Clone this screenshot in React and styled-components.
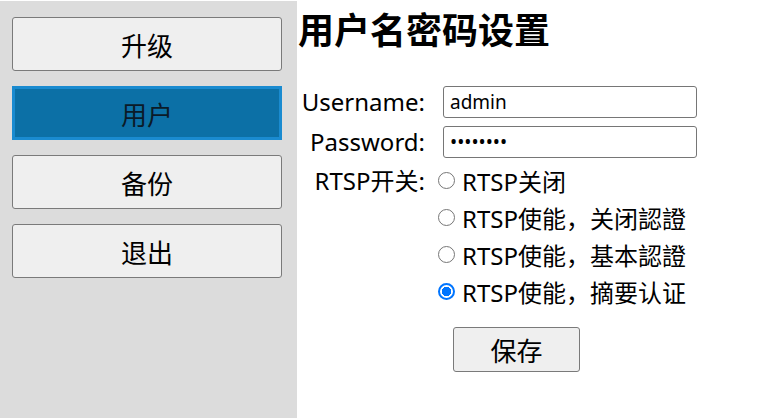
import React from "react";
import styled, { createGlobalStyle } from "styled-components";

const Global = createGlobalStyle`
  html, body { margin: 0; padding: 0; background: #fff; }
  body { font-family: "Noto Sans", "Noto Sans CJK SC", sans-serif; color: #000; }
  * { box-sizing: border-box; }
`;

const Page = styled.div`
  display: flex;
  padding-top: 1px;
  height: 418px;
  overflow: hidden;
`;

const Sidebar = styled.nav`
  width: 297px;
  flex: none;
  background: #dcdcdc;
  padding: 16px 15px 0 12px;
  display: flex;
  flex-direction: column;
  gap: 15px;
`;

const NavButton = styled.button`
  height: 54px;
  width: 100%;
  font-family: "Noto Sans CJK SC", sans-serif;
  font-size: 26px;
  color: ${(p) => (p.$active ? "#0b1a28" : "#000")};
  background: ${(p) => (p.$active ? "#0c70a6" : "#efefef")};
  border: ${(p) => (p.$active ? "3px solid #1a8bd0" : "1px solid #7a7a7a")};
  border-radius: ${(p) => (p.$active ? "0" : "3px")};
  padding: 0;
  cursor: pointer;
`;

const Content = styled.main`
  flex: 1;
  padding-left: 1px;
`;

const Title = styled.h2`
  margin: 4px 0 0;
  font-family: "Noto Sans CJK SC", sans-serif;
  font-weight: 700;
  font-size: 36px;
  line-height: 46px;
`;

const Form = styled.form`
  margin-top: 35px;
  display: grid;
  grid-template-columns: 127px 1fr;
  grid-template-rows: 40px 35.5px auto;
  column-gap: 13px;
`;

const Label = styled.label`
  text-align: right;
  font-size: 24px;
  line-height: ${(p) => p.$h};
  white-space: nowrap;
`;

const FieldCell = styled.div`
  display: flex;
  align-items: flex-start;
`;

const TextInput = styled.input`
  margin-left: 5px;
  width: 254px;
  height: 32px;
  border: 1px solid #767676;
  border-radius: 3px;
  padding: 0 6px;
  font-family: "Noto Sans", sans-serif;
  font-size: 19px;
  color: #000;
  background: #fff;
  outline: none;
`;

const RadioList = styled.div`
  display: flex;
  flex-direction: column;
`;

const RadioRow = styled.label`
  display: flex;
  align-items: center;
  height: 37px;
  font-size: 24px;
  white-space: nowrap;
`;

const Radio = styled.input`
  appearance: none;
  width: 17px;
  height: 17px;
  margin: 0 7px 0 0;
  border-radius: 50%;
  border: 1px solid #767676;
  background: #fff;
  flex: none;
  &:checked {
    border: 2px solid #0075ff;
    background: radial-gradient(circle, #0075ff 0 4.5px, #fff 5px);
  }
`;

const SaveRow = styled.div`
  margin-top: 17.5px;
  padding-left: 155px;
`;

const SaveButton = styled.button`
  width: 127px;
  height: 45px;
  font-family: "Noto Sans CJK SC", sans-serif;
  font-size: 26px;
  background: #efefef;
  border: 1px solid #7a7a7a;
  border-radius: 3px;
  color: #000;
  padding: 0;
`;

const navItems = ["升级", "用户", "备份", "退出"];
const options = [
  "RTSP关闭",
  "RTSP使能，关闭認證",
  "RTSP使能，基本認證",
  "RTSP使能，摘要认证",
];

export default function App() {
  return (
    <>
      <Global />
      <Page>
        <Sidebar>
          {navItems.map((n) => (
            <NavButton key={n} $active={n === "用户"}>
              {n}
            </NavButton>
          ))}
        </Sidebar>
        <Content>
          <Title>用户名密码设置</Title>
          <Form onSubmit={(e) => e.preventDefault()}>
            <Label $h="32px">Username:</Label>
            <FieldCell>
              <TextInput type="text" defaultValue="admin" />
            </FieldCell>
            <Label $h="32px">Password:</Label>
            <FieldCell>
              <TextInput type="password" defaultValue="12345678" />
            </FieldCell>
            <Label $h="37px">RTSP开关:</Label>
            <RadioList>
              {options.map((o, i) => (
                <RadioRow key={o}>
                  <Radio type="radio" name="rtsp" defaultChecked={i === 3} />
                  {o}
                </RadioRow>
              ))}
            </RadioList>
          </Form>
          <SaveRow>
            <SaveButton type="button">保存</SaveButton>
          </SaveRow>
        </Content>
      </Page>
    </>
  );
}
